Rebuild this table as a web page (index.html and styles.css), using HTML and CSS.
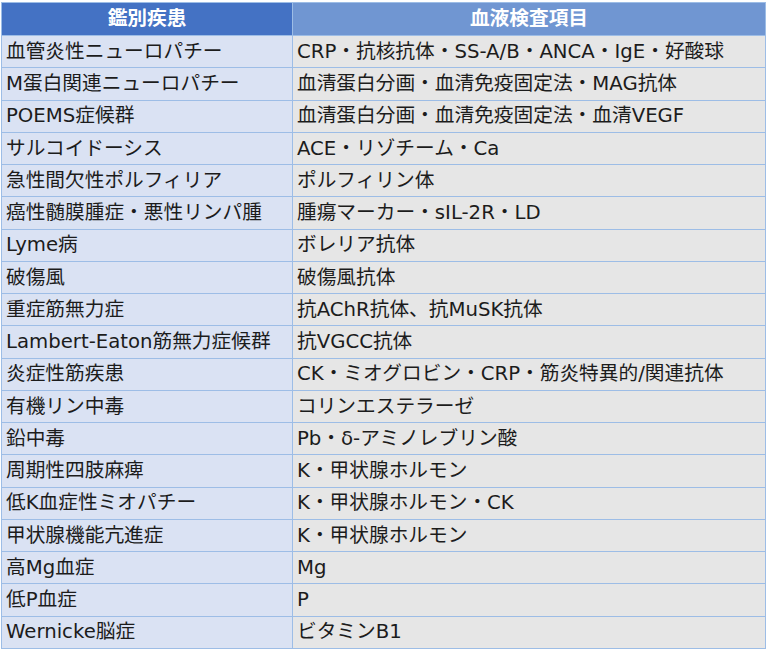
FILE: index.html
```html
<!DOCTYPE html>
<html lang="ja">
<head>
<meta charset="utf-8">
<link rel="stylesheet" href="styles.css">
</head>
<body>
<table class="dx">
  <thead>
    <tr><th class="c1">鑑別疾患</th><th class="c2">血液検査項目</th></tr>
  </thead>
  <tbody>
    <tr><td class="c1">血管炎性ニューロパチー</td><td class="c2">CRP・抗核抗体・SS-A/B・ANCA・IgE・好酸球</td></tr>
    <tr><td class="c1">M蛋白関連ニューロパチー</td><td class="c2">血清蛋白分画・血清免疫固定法・MAG抗体</td></tr>
    <tr><td class="c1">POEMS症候群</td><td class="c2">血清蛋白分画・血清免疫固定法・血清VEGF</td></tr>
    <tr><td class="c1">サルコイドーシス</td><td class="c2">ACE・リゾチーム・Ca</td></tr>
    <tr><td class="c1">急性間欠性ポルフィリア</td><td class="c2">ポルフィリン体</td></tr>
    <tr><td class="c1">癌性髄膜腫症・悪性リンパ腫</td><td class="c2">腫瘍マーカー・sIL-2R・LD</td></tr>
    <tr><td class="c1">Lyme病</td><td class="c2">ボレリア抗体</td></tr>
    <tr><td class="c1">破傷風</td><td class="c2">破傷風抗体</td></tr>
    <tr><td class="c1">重症筋無力症</td><td class="c2">抗AChR抗体、抗MuSK抗体</td></tr>
    <tr><td class="c1">Lambert-Eaton筋無力症候群</td><td class="c2">抗VGCC抗体</td></tr>
    <tr><td class="c1">炎症性筋疾患</td><td class="c2">CK・ミオグロビン・CRP・筋炎特異的/関連抗体</td></tr>
    <tr><td class="c1">有機リン中毒</td><td class="c2">コリンエステラーゼ</td></tr>
    <tr><td class="c1">鉛中毒</td><td class="c2">Pb・δ-アミノレブリン酸</td></tr>
    <tr><td class="c1">周期性四肢麻痺</td><td class="c2">K・甲状腺ホルモン</td></tr>
    <tr><td class="c1">低K血症性ミオパチー</td><td class="c2">K・甲状腺ホルモン・CK</td></tr>
    <tr><td class="c1">甲状腺機能亢進症</td><td class="c2">K・甲状腺ホルモン</td></tr>
    <tr><td class="c1">高Mg血症</td><td class="c2">Mg</td></tr>
    <tr><td class="c1">低P血症</td><td class="c2">P</td></tr>
    <tr><td class="c1">Wernicke脳症</td><td class="c2">ビタミンB1</td></tr>
  </tbody>
</table>
</body>
</html>
```
FILE: styles.css
```css
html, body {
  margin: 0;
  padding: 0;
  background: #ffffff;
}
body {
  padding: 2px 0 0 1px;
}
.dx {
  border-collapse: collapse;
  table-layout: fixed;
  width: 765px;
  font-family: "DejaVu Sans", "Noto Sans CJK JP", sans-serif;
  font-size: 19.7px;
  color: #1c1c1c;
}
.dx th, .dx td {
  border: 1px solid #9dbde6;
  padding: 0 0 0 4px;
  text-align: left;
  white-space: nowrap;
  overflow: hidden;
  line-height: 1;
}
.dx .c1 {
  width: 290px;
}
.dx thead th {
  height: 32px;
  color: #ffffff;
  font-weight: bold;
  text-align: center;
  padding: 0;
}
.dx thead th.c1 {
  background: #4472c4;
}
.dx thead th.c2 {
  background: #7096d2;
}
.dx tbody td {
  height: 31.26px;
}
.dx tbody td.c1 {
  background: #dae2f3;
}
.dx tbody td.c2 {
  background: #e6e6e6;
}
```
